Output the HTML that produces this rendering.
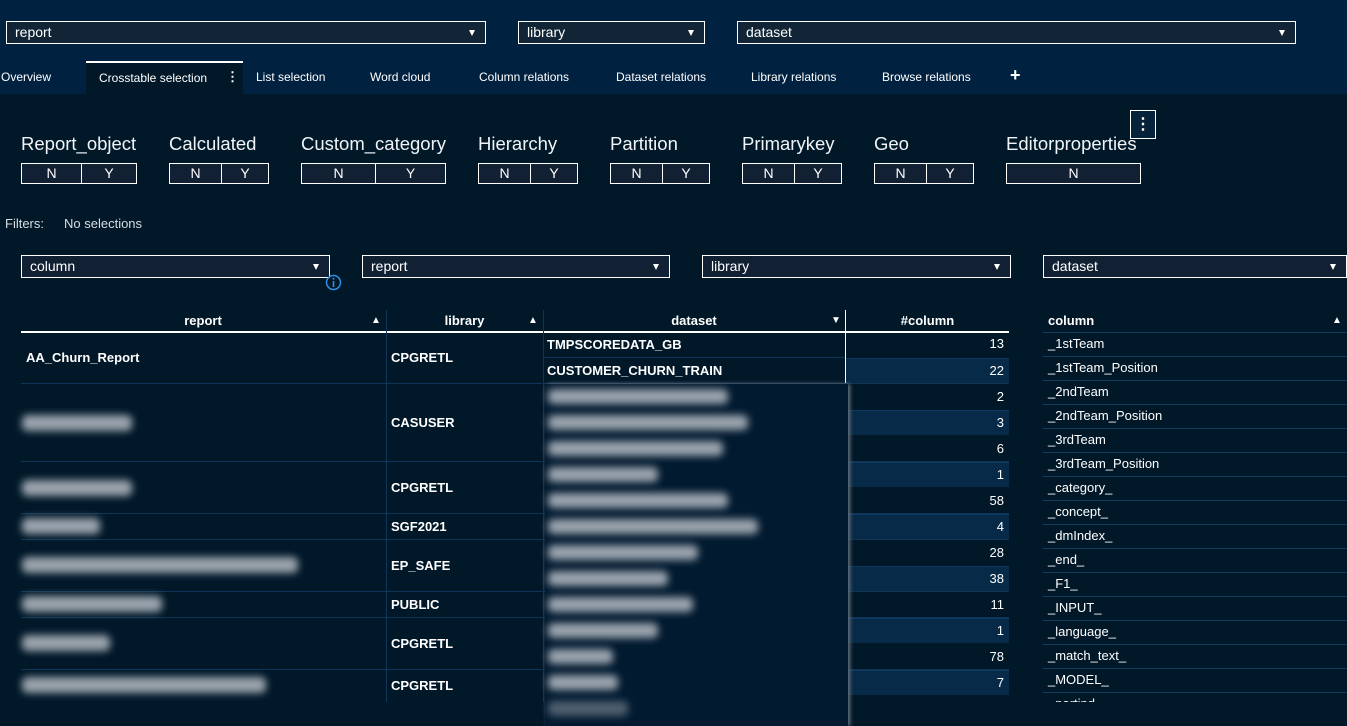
<!DOCTYPE html>
<html><head><meta charset="utf-8"><style>
*{box-sizing:border-box;margin:0;padding:0}
body{width:1347px;height:726px;overflow:hidden;background:#011829;font-family:"Liberation Sans",sans-serif;color:#fff;position:relative}
.a{position:absolute}
.hdr{left:0;top:0;width:1347px;height:94px;background:#002240}
.dd{position:absolute;height:23px;border:1px solid #fff;background:#112536;font-size:14px;line-height:21px;padding-left:8px}
.dd:after{content:"";position:absolute;right:10px;top:8px;border-left:3.5px solid transparent;border-right:3.5px solid transparent;border-top:6px solid #fff}
.tab{position:absolute;top:70px;font-size:12px}
.lbl{position:absolute;top:133px;font-size:18.5px;color:#f0f4f8}
.tg{position:absolute;top:163px;height:21px;border:1px solid #fff;background:#112033;display:flex;font-size:14px;line-height:19px}
.tg span{flex:1;text-align:center}
.tg span+span{border-left:1px solid #fff}
.cell{position:absolute;font-size:13px;font-weight:bold}
.arr{position:absolute;font-size:10px}
.hl{position:absolute;background:#062a48;border-top:1px solid #0d3a5e}
.line{position:absolute;height:1px;background:#0c3558}
.vl{position:absolute;width:1px;background:#0c3558}
.blur{position:absolute;height:15px;background:#9aa3ad;border-radius:5px;filter:blur(4px)}
.li{position:absolute;left:1043px;width:304px;height:24px;border-top:1px solid #0c3a60;font-size:13px;line-height:22px;padding-left:5px}
.num{position:absolute;left:846px;width:158px;text-align:right;font-size:13px}
</style></head><body>
<div class="a hdr"></div>
<div class="dd" style="left:6px;top:21px;width:480px">report</div>
<div class="dd" style="left:518px;top:21px;width:187px">library</div>
<div class="dd" style="left:737px;top:21px;width:559px">dataset</div>
<div class="a" style="left:86px;top:61px;width:157px;height:33px;background:#011829;border-top:2px solid #fff"></div>
<div class="tab" style="left:1px">Overview</div>
<div class="tab" style="left:99px;top:71px">Crosstable selection</div>
<div class="tab" style="left:226px;top:69px;font-weight:bold;font-size:13px">⋮</div>
<div class="tab" style="left:256px">List selection</div>
<div class="tab" style="left:370px">Word cloud</div>
<div class="tab" style="left:479px">Column relations</div>
<div class="tab" style="left:616px">Dataset relations</div>
<div class="tab" style="left:751px">Library relations</div>
<div class="tab" style="left:882px">Browse relations</div>
<div class="tab" style="left:1010px;top:65px;font-size:18px;font-weight:bold">+</div>

<div class="lbl" style="left:21px">Report_object</div>
<div class="tg" style="left:21px;width:116px"><span style="flex:0 0 59px">N</span><span>Y</span></div>
<div class="lbl" style="left:169px">Calculated</div>
<div class="tg" style="left:169px;width:100px"><span style="flex:0 0 51px">N</span><span>Y</span></div>
<div class="lbl" style="left:301px">Custom_category</div>
<div class="tg" style="left:301px;width:145px"><span style="flex:0 0 73px">N</span><span>Y</span></div>
<div class="lbl" style="left:478px">Hierarchy</div>
<div class="tg" style="left:478px;width:100px"><span style="flex:0 0 51px">N</span><span>Y</span></div>
<div class="lbl" style="left:610px">Partition</div>
<div class="tg" style="left:610px;width:100px"><span style="flex:0 0 51px">N</span><span>Y</span></div>
<div class="lbl" style="left:742px">Primarykey</div>
<div class="tg" style="left:742px;width:100px"><span style="flex:0 0 51px">N</span><span>Y</span></div>
<div class="lbl" style="left:874px">Geo</div>
<div class="tg" style="left:874px;width:100px"><span style="flex:0 0 51px">N</span><span>Y</span></div>
<div class="lbl" style="left:1006px">Editorproperties</div>
<div class="tg" style="left:1006px;width:135px"><span>N</span></div>
<div class="a" style="left:1130px;top:110px;width:26px;height:29px;border:1px solid #fff;background:#06223a;text-align:center;font-weight:bold;font-size:16px;line-height:27px">⋮</div>

<div class="a" style="left:5px;top:216px;font-size:13px;color:#d8dde2">Filters:</div>
<div class="a" style="left:64px;top:216px;font-size:13px;color:#d8dde2">No selections</div>

<div class="dd" style="left:21px;top:255px;width:309px;background:#112033">column</div>
<div class="dd" style="left:362px;top:255px;width:308px;background:#112033">report</div>
<div class="dd" style="left:702px;top:255px;width:309px;background:#112033">library</div>
<div class="dd" style="left:1043px;top:255px;width:304px;background:#112033">dataset</div>
<svg class="a" style="left:325px;top:274px" width="17" height="17" viewBox="0 0 17 17"><circle cx="8.5" cy="8.5" r="7" fill="none" stroke="#2f8fe0" stroke-width="1.5"/><rect x="7.7" y="7" width="1.6" height="6" fill="#2f8fe0"/><circle cx="8.5" cy="4.8" r="1" fill="#2f8fe0"/></svg>

<div class="cell" style="left:21px;top:313px;width:364px;text-align:center">report</div>
<div class="arr" style="left:371px;top:315px">▲</div>
<div class="cell" style="left:386px;top:313px;width:157px;text-align:center">library</div>
<div class="arr" style="left:528px;top:315px">▲</div>
<div class="cell" style="left:543px;top:313px;width:302px;text-align:center">dataset</div>
<div class="arr" style="left:831px;top:315px">▼</div>
<div class="cell" style="left:846px;top:313px;width:163px;text-align:center">#column</div>
<div class="a" style="left:21px;top:331px;width:988px;height:2px;background:#fff"></div>
<div class="vl" style="left:386px;top:310px;height:392px"></div>
<div class="vl" style="left:543px;top:310px;height:392px"></div>
<div class="a" style="left:845px;top:310px;width:1px;height:73px;background:#fff"></div>

<div class="hl" style="left:846px;top:358px;width:163px;height:25px"></div>
<div class="hl" style="left:846px;top:410px;width:163px;height:25px"></div>
<div class="hl" style="left:846px;top:462px;width:163px;height:25px"></div>
<div class="hl" style="left:846px;top:514px;width:163px;height:25px"></div>
<div class="hl" style="left:846px;top:566px;width:163px;height:25px"></div>
<div class="hl" style="left:846px;top:618px;width:163px;height:25px"></div>
<div class="hl" style="left:846px;top:670px;width:163px;height:25px"></div>

<div class="line" style="left:543px;top:357px;width:302px"></div>
<div class="line" style="left:21px;top:383px;width:988px"></div>
<div class="line" style="left:21px;top:461px;width:988px"></div>
<div class="line" style="left:21px;top:513px;width:988px"></div>
<div class="line" style="left:21px;top:539px;width:988px"></div>
<div class="line" style="left:21px;top:591px;width:988px"></div>
<div class="line" style="left:21px;top:617px;width:988px"></div>
<div class="line" style="left:21px;top:669px;width:988px"></div>

<div class="cell" style="left:26px;top:350px">AA_Churn_Report</div>
<div class="cell" style="left:391px;top:350px">CPGRETL</div>
<div class="cell" style="left:547px;top:337px">TMPSCOREDATA_GB</div>
<div class="cell" style="left:547px;top:363px">CUSTOMER_CHURN_TRAIN</div>
<div class="cell" style="left:391px;top:415px">CASUSER</div>
<div class="cell" style="left:391px;top:480px">CPGRETL</div>
<div class="cell" style="left:391px;top:519px">SGF2021</div>
<div class="cell" style="left:391px;top:558px">EP_SAFE</div>
<div class="cell" style="left:391px;top:597px">PUBLIC</div>
<div class="cell" style="left:391px;top:636px">CPGRETL</div>
<div class="cell" style="left:391px;top:678px">CPGRETL</div>

<div class="a" style="left:0;top:702px;width:1040px;height:24px;background:#011829"></div>
<div class="a" style="left:545px;top:384px;width:303px;height:342px;background:#021a30;box-shadow:2px 0 4px #6a7580"></div>
<div class="blur" style="left:548px;top:389px;width:180px"></div>
<div class="blur" style="left:548px;top:415px;width:200px"></div>
<div class="blur" style="left:548px;top:441px;width:175px"></div>
<div class="blur" style="left:548px;top:467px;width:110px"></div>
<div class="blur" style="left:548px;top:493px;width:180px"></div>
<div class="blur" style="left:548px;top:519px;width:210px"></div>
<div class="blur" style="left:548px;top:545px;width:150px"></div>
<div class="blur" style="left:548px;top:571px;width:120px"></div>
<div class="blur" style="left:548px;top:597px;width:145px"></div>
<div class="blur" style="left:548px;top:623px;width:110px"></div>
<div class="blur" style="left:548px;top:649px;width:65px"></div>
<div class="blur" style="left:548px;top:675px;width:70px"></div>
<div class="blur" style="left:548px;top:701px;width:80px;opacity:.5"></div>
<div class="blur" style="left:22px;top:415px;width:110px;height:16px"></div>
<div class="blur" style="left:22px;top:480px;width:110px;height:16px"></div>
<div class="blur" style="left:22px;top:518px;width:78px;height:16px"></div>
<div class="blur" style="left:22px;top:557px;width:276px;height:16px"></div>
<div class="blur" style="left:22px;top:596px;width:140px;height:16px"></div>
<div class="blur" style="left:22px;top:635px;width:88px;height:16px"></div>
<div class="blur" style="left:22px;top:677px;width:244px;height:16px"></div>

<div class="num" style="top:336px">13</div>
<div class="num" style="top:363px">22</div>
<div class="num" style="top:389px">2</div>
<div class="num" style="top:415px">3</div>
<div class="num" style="top:441px">6</div>
<div class="num" style="top:467px">1</div>
<div class="num" style="top:493px">58</div>
<div class="num" style="top:519px">4</div>
<div class="num" style="top:545px">28</div>
<div class="num" style="top:571px">38</div>
<div class="num" style="top:597px">11</div>
<div class="num" style="top:623px">1</div>
<div class="num" style="top:649px">78</div>
<div class="num" style="top:675px">7</div>

<div class="cell" style="left:1048px;top:313px">column</div>
<div class="arr" style="left:1332px;top:315px">▲</div>
<div class="li" style="top:332px">_1stTeam</div>
<div class="li" style="top:356px">_1stTeam_Position</div>
<div class="li" style="top:380px">_2ndTeam</div>
<div class="li" style="top:404px">_2ndTeam_Position</div>
<div class="li" style="top:428px">_3rdTeam</div>
<div class="li" style="top:452px">_3rdTeam_Position</div>
<div class="li" style="top:476px">_category_</div>
<div class="li" style="top:500px">_concept_</div>
<div class="li" style="top:524px">_dmIndex_</div>
<div class="li" style="top:548px">_end_</div>
<div class="li" style="top:572px">_F1_</div>
<div class="li" style="top:596px">_INPUT_</div>
<div class="li" style="top:620px">_language_</div>
<div class="li" style="top:644px">_match_text_</div>
<div class="li" style="top:668px">_MODEL_</div>
<div class="li" style="top:692px;height:10px;overflow:hidden">_partind</div>
</body></html>
